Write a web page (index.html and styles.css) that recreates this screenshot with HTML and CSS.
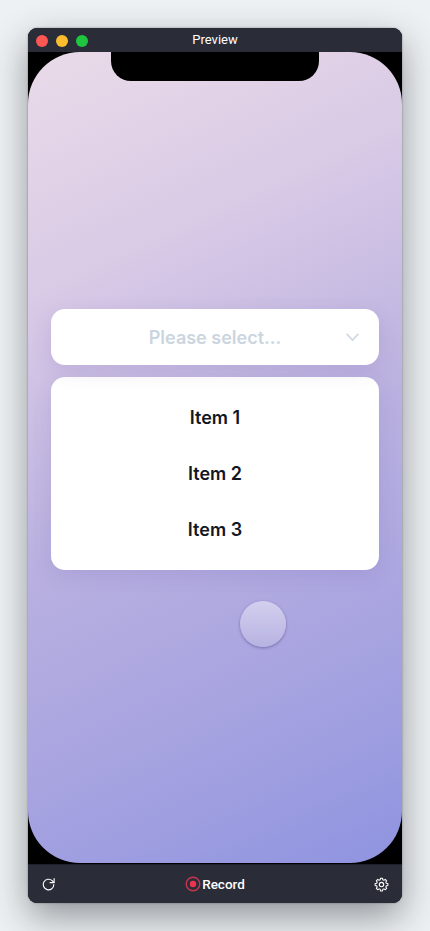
FILE: index.html
```html
<!DOCTYPE html>
<html lang="en">
<head>
<meta charset="utf-8">
<title>Preview</title>
<link rel="stylesheet" href="styles.css">
</head>
<body>
<div class="window">
  <header class="titlebar">
    <div class="lights">
      <span class="light red"></span>
      <span class="light yellow"></span>
      <span class="light green"></span>
    </div>
    <span class="title">Preview</span>
  </header>
  <main class="stage">
    <div class="screen">
      <div class="select">
        <span class="placeholder">Please select...</span>
        <svg class="chevron" viewBox="0 0 16 10" width="15" height="9" aria-hidden="true"><path d="M2 1.500 8 8l6-6.500" fill="none" stroke="#cbd5e0" stroke-width="1.700" stroke-linecap="round" stroke-linejoin="round"/></svg>
      </div>
      <ul class="menu">
        <li class="item">Item 1</li>
        <li class="item">Item 2</li>
        <li class="item">Item 3</li>
      </ul>
      <div class="cursor"></div>
    </div>
    <div class="notch"></div>
  </main>
  <footer class="toolbar">
    <svg class="tool" viewBox="0 0 24 24" width="15" height="15" aria-hidden="true"><path d="M20.500 12a8.500 8.500 0 1 1-2.600-6.100L20.500 8.500" fill="none" stroke="#fff" stroke-width="1.800" stroke-linecap="round" stroke-linejoin="round"/><path d="M21 2.500v6.500h-6.500" fill="none" stroke="#fff" stroke-width="1.800" stroke-linecap="round" stroke-linejoin="round"/></svg>
    <div class="record">
      <svg viewBox="0 0 16 16" width="16" height="16" aria-hidden="true"><circle cx="8" cy="8" r="6.800" fill="none" stroke="#c9344d" stroke-width="1.400"/><circle cx="8" cy="8" r="3.200" fill="#ee3350"/></svg>
      <span>Record</span>
    </div>
    <svg class="tool" viewBox="0 0 24 24" width="15" height="15" aria-hidden="true"><path d="M10.300 2.500h3.400l.6 2.800 1.900.8 2.400-1.500 2.400 2.400-1.500 2.400.8 1.900 2.800.6v3.400l-2.800.6-.8 1.900 1.500 2.400-2.400 2.400-2.400-1.500-1.900.8-.6 2.800h-3.400l-.6-2.800-1.900-.8-2.400 1.500-2.400-2.400 1.500-2.400-.8-1.900-2.800-.6v-3.400l2.800-.6.8-1.900-1.500-2.400 2.400-2.400 2.400 1.500 1.900-.8z" transform="translate(12 12) scale(.92) translate(-12 -13.500)" fill="none" stroke="#fff" stroke-width="1.800" stroke-linejoin="round"/><circle cx="12" cy="12" r="3.500" fill="none" stroke="#fff" stroke-width="1.800"/></svg>
  </footer>
</div>
</body>
</html>
```
FILE: styles.css
```css
* {
  box-sizing: border-box;
}

html,
body {
  height: 100%;
}

body {
  margin: 0;
  padding: 28px;
  overflow: hidden;
  background: #eef1f3;
  font-family: Inter, "Liberation Sans", sans-serif;
}

.window {
  display: flex;
  flex-direction: column;
  width: 374px;
  height: 875px;
  border-radius: 9px;
  overflow: hidden;
  background: #000;
  box-shadow: 0 14px 36px rgba(30, 38, 46, 0.45), 0 0 2px rgba(0, 0, 0, 0.4);
}

.titlebar {
  position: relative;
  display: flex;
  flex: none;
  align-items: center;
  justify-content: center;
  height: 24px;
  background: #2a2d38;
}

.lights {
  position: absolute;
  top: 7px;
  left: 8px;
  display: flex;
  gap: 8px;
}

.light {
  width: 12px;
  height: 12px;
  border-radius: 50%;
}

.red {
  background: #fc5753;
}

.yellow {
  background: #fdbc2e;
}

.green {
  background: #1fc53f;
}

.title {
  font-family: Roboto, sans-serif;
  font-size: 13px;
  font-weight: 400;
  line-height: 22px;
  color: #fff;
}

.stage {
  position: relative;
  flex: none;
  height: 812px;
  background: #000;
}

.screen {
  position: relative;
  height: 811px;
  padding: 257px 23px 0;
  border-radius: 52px;
  background: linear-gradient(155deg, #eadbe9 0%, #d9cae6 25%, #bab1e0 52%, #a8a4e0 75%, #8f94e0 100%);
}

.notch {
  position: absolute;
  top: 0;
  left: 83px;
  width: 208px;
  height: 29px;
  border-radius: 0 0 20px 20px;
  background: #000;
}

.select {
  position: relative;
  display: flex;
  align-items: center;
  justify-content: center;
  height: 56px;
  border-radius: 14px;
  background: #fff;
  box-shadow: 0 6px 20px rgba(90, 70, 160, 0.14);
}

.placeholder {
  font-size: 18px;
  font-weight: 600;
  color: #cbd5e0;
}

.chevron {
  position: absolute;
  top: 24px;
  right: 19px;
}

.menu {
  display: flex;
  flex-direction: column;
  height: 193px;
  margin: 12px 0 0;
  padding: 12px 0;
  border-radius: 14px;
  background: #fff;
  list-style: none;
  box-shadow: 0 6px 20px rgba(90, 70, 160, 0.14);
}

.item {
  display: flex;
  flex: none;
  align-items: center;
  justify-content: center;
  height: 56px;
  font-size: 18px;
  font-weight: 600;
  color: #14161f;
}

.cursor {
  position: absolute;
  top: 549px;
  left: 212px;
  width: 46px;
  height: 46px;
  border-radius: 50%;
  background: linear-gradient(180deg, #d2cfee, #b7b3e2);
  box-shadow: 0 1px 3px rgba(70, 60, 130, 0.55);
}

.toolbar {
  display: flex;
  flex: 1;
  align-items: center;
  justify-content: space-between;
  padding: 0 13px;
  border-top: 1px solid #1e2030;
  background: #2a2d38;
}

.tool {
  display: block;
}

.record {
  display: flex;
  align-items: center;
  gap: 1px;
  font-family: Roboto, sans-serif;
  font-size: 13.500px;
  font-weight: 500;
  color: #fff;
}
```
